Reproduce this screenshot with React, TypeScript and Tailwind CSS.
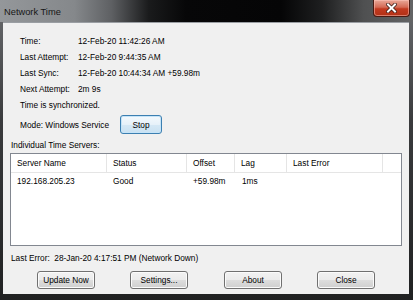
import React from "react";

const font = { fontFamily: '"Liberation Sans", Arial, sans-serif' };

function Btn({ children, focused }: { children: React.ReactNode; focused?: boolean }) {
  return (
    <div
      className={
        focused
          ? "flex h-[19px] w-[42px] items-center justify-center rounded-[3px] border border-[#3c7fb1] bg-[linear-gradient(180deg,#f4f9fd_0%,#e6f1f9_50%,#d5e8f5_51%,#c9e1f2_100%)] text-[8.3px] text-black shadow-[inset_0_0_0_1px_#c5e4f8]"
          : "flex h-[18px] w-[58px] items-center justify-center rounded-[3px] border border-[#707070] bg-[linear-gradient(180deg,#f2f2f2_0%,#ebebeb_50%,#dddddd_51%,#cfcfcf_100%)] text-[8.3px] text-black shadow-[inset_0_0_0_1px_#fbfbfb]"
      }
    >
      {children}
    </div>
  );
}

function InfoRow({ label, value }: { label: string; value: string }) {
  return (
    <div className="flex h-[16px] items-center">
      <div className="w-[58px] whitespace-nowrap">{label}</div>
      <div className="whitespace-nowrap">{value}</div>
    </div>
  );
}

export default function App() {
  return (
    <div
      className="flex h-[300px] w-[413px] flex-col overflow-hidden bg-[linear-gradient(180deg,#6a6c6f_0%,#3a3b3d_40%,#202122_100%)] text-black"
      style={font}
    >
      {/* Title bar */}
      <div className="flex h-[22px] shrink-0 items-start justify-between bg-[linear-gradient(90deg,#94979a_0%,#85888b_18%,#5e6063_27%,#1a1b1c_36%,#070708_45%,#050506_68%,#1e1f20_78%,#4f5051_88%,#636465_100%)]">
        <div className="pl-[4px] pt-[6px] text-[9.3px] leading-[12px] text-[#161616]">
          Network Time
        </div>
        <div className="mr-[3px] flex h-[17px] w-[37px] items-center justify-center rounded-b-[4px] border border-t-0 border-[#4a1a12] bg-[linear-gradient(180deg,#e9a898_0%,#d46a55_45%,#c23a20_55%,#b13015_100%)] shadow-[inset_0_0_0_1px_rgba(255,200,190,0.5)]">
          <svg width="11" height="10" viewBox="0 0 11 10">
            <path d="M2 1.5 L9 8.5 M9 1.5 L2 8.5" stroke="#3a1a14" strokeWidth="3.6" strokeLinecap="square" />
            <path d="M2 1.5 L9 8.5 M9 1.5 L2 8.5" stroke="#ffffff" strokeWidth="2" strokeLinecap="square" />
          </svg>
        </div>
      </div>

      {/* Client area */}
      <div className="ml-[3px] mr-[4px] mb-[6px] flex flex-1 flex-col border-t border-[#9a9ea3] bg-[#f0f0f0] px-[7px] text-[8.3px] leading-[12px]">
        <div className="pl-[10px] pt-[10px]">
          <InfoRow label="Time:" value="12-Feb-20 11:42:26 AM" />
          <InfoRow label="Last Attempt:" value="12-Feb-20 9:44:35 AM" />
          <InfoRow label="Last Sync:" value="12-Feb-20 10:44:34 AM +59.98m" />
          <InfoRow label="Next Attempt:" value="2m 9s" />
          <div className="flex h-[16px] items-center">Time is synchronized.</div>
          <div className="mt-[2px] flex h-[19px] items-center gap-[11px]">
            <div className="whitespace-nowrap">Mode: Windows Service</div>
            <Btn focused>Stop</Btn>
          </div>
        </div>

        <div className="mt-[5px] pl-[1px]">Individual Time Servers:</div>

        <div className="mt-[2px] flex h-[93px] flex-col border border-[#828790] bg-white">
          <div className="flex h-[19px] items-center border-b border-[#e5e5e5]">
            <div className="w-[95px] pl-[6px]">Server Name</div>
            <div className="h-full w-px bg-[#e5e5e5]" />
            <div className="w-[79px] pl-[6px]">Status</div>
            <div className="h-full w-px bg-[#e5e5e5]" />
            <div className="w-[47px] pl-[6px]">Offset</div>
            <div className="h-full w-px bg-[#e5e5e5]" />
            <div className="w-[51px] pl-[6px]">Lag</div>
            <div className="h-full w-px bg-[#e5e5e5]" />
            <div className="w-[95px] pl-[6px]">Last Error</div>
            <div className="h-full w-px bg-[#e5e5e5]" />
            <div className="flex-1" />
          </div>
          <div className="flex h-[16px] items-center">
            <div className="w-[96px] pl-[6px]">192.168.205.23</div>
            <div className="w-[80px] pl-[6px]">Good</div>
            <div className="w-[48px] pl-[6px]">+59.98m</div>
            <div className="w-[52px] pl-[7px]">1ms</div>
          </div>
        </div>

        <div className="mt-[6px] pl-[1px]">Last Error:&nbsp; 28-Jan-20 4:17:51 PM (Network Down)</div>

        <div className="mt-[7px] flex pl-[27px]">
          <Btn>Update Now</Btn>
          <div className="w-[35px]" />
          <Btn>Settings...</Btn>
          <div className="w-[36px]" />
          <Btn>About</Btn>
          <div className="w-[35px]" />
          <Btn>Close</Btn>
        </div>
      </div>
    </div>
  );
}
